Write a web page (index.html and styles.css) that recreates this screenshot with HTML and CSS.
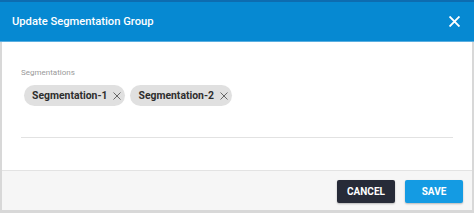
FILE: index.html
```html
<!DOCTYPE html>
<html>
<head>
<meta charset="utf-8">
<link rel="stylesheet" href="styles.css">
</head>
<body>
<div class="dialog">
  <header class="dlg-header">
    <span class="dlg-title">Update Segmentation Group</span>
    <svg class="close" width="11" height="11" viewBox="0 0 11 11"><path d="M1.2 1.2 L9.8 9.8 M9.8 1.2 L1.2 9.8" stroke="#fff" stroke-width="1.9" stroke-linecap="square"/></svg>
  </header>
  <div class="dlg-body">
    <div class="field">
      <div class="label">Segmentations</div>
      <div class="chips">
        <span class="chip">Segmentation-1<svg class="chip-x" width="8" height="8" viewBox="0 0 8 8"><path d="M0.5 0.5 L7.5 7.5 M7.5 0.5 L0.5 7.5" stroke="#666" stroke-width="1"/></svg></span>
        <span class="chip">Segmentation-2<svg class="chip-x" width="8" height="8" viewBox="0 0 8 8"><path d="M0.5 0.5 L7.5 7.5 M7.5 0.5 L0.5 7.5" stroke="#666" stroke-width="1"/></svg></span>
      </div>
    </div>
  </div>
  <footer class="dlg-footer">
    <button class="btn btn-cancel">CANCEL</button>
    <button class="btn btn-save">SAVE</button>
  </footer>
</div>
</body>
</html>
```
FILE: styles.css
```css
html, body {
  margin: 0;
  padding: 0;
  background: #d8d8d8;
  font-family: Roboto, "Liberation Sans", sans-serif;
}
body {
  width: 474px;
  height: 213px;
  overflow: hidden;
  border-top: 2px solid #0d6cb0;
  box-sizing: border-box;
}
.dialog {
  width: 474px;
  height: 208px;
  display: flex;
  flex-direction: column;
}
.dlg-header {
  height: 40px;
  background: #0689d2;
  display: flex;
  align-items: center;
  justify-content: space-between;
  padding: 0 14px 0 12px;
  box-sizing: border-box;
  border-bottom: 1px solid #5aaee0;
}
.dlg-title {
  color: #fff;
  font-size: 11.2px;
  font-weight: 500;
}
.close { display: block; }
.dlg-body {
  flex: 1;
  background: #fff;
  margin: 0 2px 0 2px;
  padding: 26px 19px 0 19px;
}
.field {
  border-bottom: 1px solid #e2e2e2;
  padding-bottom: 31px;
}
.label {
  font-size: 8px;
  color: #9a9a9a;
  margin-bottom: 8px;
}
.chips {
  display: flex;
  gap: 5px;
  padding-left: 3px;
}
.chip {
  display: inline-flex;
  align-items: center;
  height: 21px;
  padding: 0 4px 0 8px;
  background: #e0e0e0;
  border-radius: 11px;
  font-size: 10.4px;
  font-weight: 700;
  color: #2e2e2e;
}
.chip-x { margin-left: 6px; }
.dlg-footer {
  height: 40px;
  background: #f6f6f6;
  border-top: 1px solid #e3e3e3;
  margin: 0 2px;
  display: flex;
  align-items: center;
  justify-content: flex-end;
  gap: 10px;
  padding-right: 9px;
  padding-top: 2px;
  box-sizing: border-box;
}
.btn {
  border: none;
  height: 23px;
  width: 58px;
  border-radius: 2px;
  font-family: Roboto, "Liberation Sans", sans-serif;
  font-size: 10px;
  font-weight: 700;
  color: #fff;
  padding: 0;
  box-shadow: 0 1px 2px rgba(0,0,0,0.25);
}
.btn-cancel { background: #272b38; }
.btn-save { background: #149be3; }
```
